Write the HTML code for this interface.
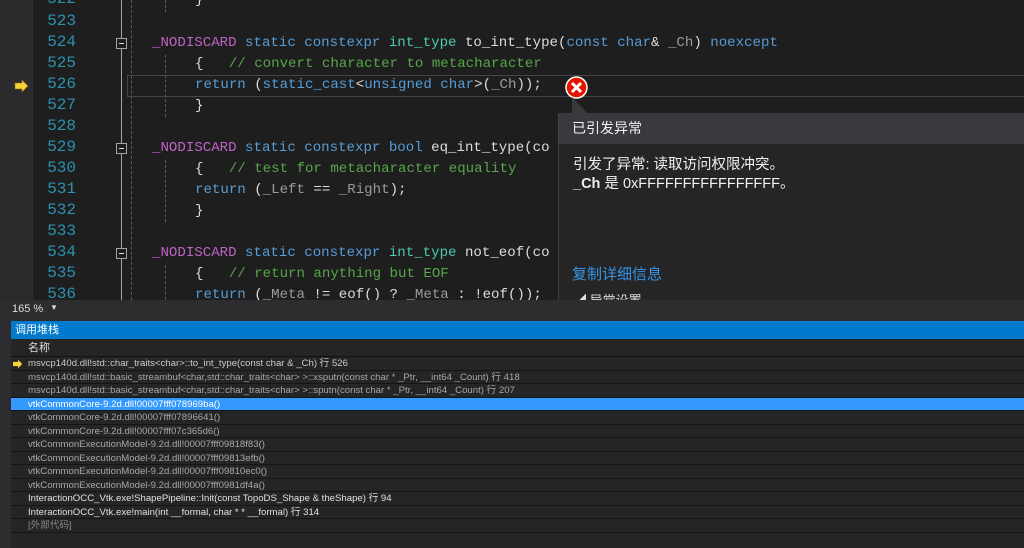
<!DOCTYPE html>
<html><head><meta charset="utf-8"><style>
*{margin:0;padding:0;box-sizing:border-box}
body{width:1024px;height:548px;overflow:hidden;background:#1e1e1e;position:relative;font-family:"Liberation Sans","Noto Sans CJK SC",sans-serif}
.gut{position:absolute;left:0;top:0;width:33px;height:300px;background:#2b2b2e}
.code{position:absolute;left:33px;top:0;width:991px;height:300px;background:#1e1e1e;overflow:hidden}
.ln{position:absolute;left:0;width:43px;text-align:right;color:#2b91af;font:16px "Liberation Mono",monospace}
.cl{position:absolute;left:119px;white-space:pre;color:#dcdcdc;font:14.1px "Liberation Mono","Noto Sans CJK SC",monospace}
.cl.i{left:162px}
.m{color:#bd63c5}.k{color:#569cd6}.t{color:#4ec9b0}.c{color:#57a64a}.g{color:#9b9b9b}
.fold{position:absolute;left:83px;width:11px;height:11px;border:1px solid #a5a5a5;background:#1e1e1e}
.fold:after{content:"";position:absolute;left:2px;top:4px;width:5px;height:1px;background:#ddd}
.vl{position:absolute;left:88px;width:1px;background:#a5a5a5}
.dash{position:absolute;width:0;border-left:1px dashed #5a5a5a}
.zoom{position:absolute;left:0;top:300px;width:1024px;height:20px;background:#2d2d30;color:#ddd;font-size:11px}
.panel{position:absolute;left:0;top:320px;width:1024px;height:228px;background:#2d2d30}
.hdr{position:absolute;left:11px;top:1px;width:1013px;height:18px;background:#007acc;color:#fff;font-size:11px;line-height:18px;padding-left:4px}
.colh{position:absolute;left:11px;top:19px;width:1013px;height:18px;background:#252526;color:#ddd;font-size:11px;line-height:18px;padding-left:17px;border-bottom:1px solid #111}
.row{position:absolute;left:11px;width:1013px;height:13.5px;background:#252526;border-bottom:1px solid #151515;color:#a8a8a8;font-size:9.6px;line-height:13px;padding-left:17px;white-space:nowrap}
.row.w{color:#e0e0e0}
.row.sel{background:#3399ff;color:#fff}
.pop{position:absolute;left:558px;top:113px;width:466px;height:187px;background:#252526;border-left:1px solid #3f3f46}
.ph{height:31px;background:#3a3a3e;color:#f1f1f1;font-size:14px;line-height:31px;padding-left:13px}
</style></head><body>
<div class="gut"></div>
<div class="code">
<div class="ln" style="top:-10px">522</div>
<div class="ln" style="top:12px">523</div>
<div class="ln" style="top:33px">524</div>
<div class="ln" style="top:54px">525</div>
<div class="ln" style="top:75px">526</div>
<div class="ln" style="top:96px">527</div>
<div class="ln" style="top:117px">528</div>
<div class="ln" style="top:138px">529</div>
<div class="ln" style="top:159px">530</div>
<div class="ln" style="top:180px">531</div>
<div class="ln" style="top:201px">532</div>
<div class="ln" style="top:222px">533</div>
<div class="ln" style="top:243px">534</div>
<div class="ln" style="top:264px">535</div>
<div class="ln" style="top:285px">536</div>
<div class="vl" style="top:0;height:300px"></div>
<div class="fold" style="top:38px"></div>
<div class="fold" style="top:143px"></div>
<div class="fold" style="top:248px"></div>
<div class="dash" style="left:98px;top:0;height:300px"></div>
<div class="dash" style="left:132px;top:0;height:12px"></div>
<div class="dash" style="left:132px;top:55px;height:62px"></div>
<div class="dash" style="left:132px;top:160px;height:62px"></div>
<div class="dash" style="left:132px;top:265px;height:40px"></div>
<div style="position:absolute;left:94px;top:75px;width:910px;height:22px;border:1px solid #46464a"></div>
<div class="cl i" style="top:-8px">}</div>
<div class="cl" style="top:35px"><span class="m">_NODISCARD</span> <span class="k">static constexpr</span> <span class="t">int_type</span> to_int_type(<span class="k">const char</span>&amp; <span class="g">_Ch</span>) <span class="k">noexcept</span></div>
<div class="cl i" style="top:56px">{   <span class="c">// convert character to metacharacter</span></div>
<div class="cl i" style="top:77px"><span class="k">return</span> (<span class="k">static_cast</span>&lt;<span class="k">unsigned char</span>&gt;(<span class="g">_Ch</span>));</div>
<div class="cl i" style="top:98px">}</div>
<div class="cl" style="top:140px"><span class="m">_NODISCARD</span> <span class="k">static constexpr bool</span> eq_int_type(co</div>
<div class="cl i" style="top:161px">{   <span class="c">// test for metacharacter equality</span></div>
<div class="cl i" style="top:182px"><span class="k">return</span> (<span class="g">_Left</span> == <span class="g">_Right</span>);</div>
<div class="cl i" style="top:203px">}</div>
<div class="cl" style="top:245px"><span class="m">_NODISCARD</span> <span class="k">static constexpr</span> <span class="t">int_type</span> not_eof(co</div>
<div class="cl i" style="top:266px">{   <span class="c">// return anything but EOF</span></div>
<div class="cl i" style="top:287px"><span class="k">return</span> (<span class="g">_Meta</span> != eof() ? <span class="g">_Meta</span> : !eof());</div>
</div>
<svg style="position:absolute;left:14px;top:79px" width="16" height="14" viewBox="0 0 16 14"><path d="M1 4h7V1l6 6-6 6V10H1z" fill="#f7d13b" stroke="#8a6d00" stroke-width=".6"/></svg>
<svg style="position:absolute;left:565px;top:76px" width="23" height="23" viewBox="0 0 23 23"><circle cx="11.5" cy="11.5" r="10.5" fill="#e51400" stroke="#fff" stroke-width="1.5"/><path d="M7 7l9 9M16 7l-9 9" stroke="#fff" stroke-width="3"/></svg>
<div class="pop">
<div class="ph">已引发异常</div>
<div style="position:absolute;left:14px;top:43px;color:#f1f1f1;font-size:14.5px;line-height:19px">引发了异常: 读取访问权限冲突。<br><b>_Ch</b> 是 0xFFFFFFFFFFFFFFFF。</div>
<div style="position:absolute;left:13px;top:150px;color:#3794e6;font-size:15px">复制详细信息</div>
<div style="position:absolute;left:14px;top:178px;color:#ddd;font-size:13px;height:9px;overflow:hidden;line-height:20px">◢ 异常设置</div>
</div>
<svg style="position:absolute;left:558px;top:97px" width="30" height="17"><path d="M14 0L14 17L30 17Z" fill="#3a3a3e"/></svg>
<div class="zoom"><span style="position:absolute;left:12px;top:3px">165 %</span><span style="position:absolute;left:50px;top:3px;font-size:8px">▼</span></div>
<div class="panel">
<div class="hdr">调用堆栈</div>
<div class="colh">名称</div>
<div class="row" style="top:37px;color:#ccc">msvcp140d.dll!std::char_traits&lt;char&gt;::to_int_type(const char &amp; _Ch) 行 526</div>
<div class="row" style="top:50.5px">msvcp140d.dll!std::basic_streambuf&lt;char,std::char_traits&lt;char&gt; &gt;::xsputn(const char * _Ptr, __int64 _Count) 行 418</div>
<div class="row" style="top:64px">msvcp140d.dll!std::basic_streambuf&lt;char,std::char_traits&lt;char&gt; &gt;::sputn(const char * _Ptr, __int64 _Count) 行 207</div>
<div class="row sel" style="top:77.5px">vtkCommonCore-9.2d.dll!00007fff078969ba()</div>
<div class="row" style="top:91px">vtkCommonCore-9.2d.dll!00007fff07896641()</div>
<div class="row" style="top:104.5px">vtkCommonCore-9.2d.dll!00007fff07c365d6()</div>
<div class="row" style="top:118px">vtkCommonExecutionModel-9.2d.dll!00007fff09818f83()</div>
<div class="row" style="top:131.5px">vtkCommonExecutionModel-9.2d.dll!00007fff09813efb()</div>
<div class="row" style="top:145px">vtkCommonExecutionModel-9.2d.dll!00007fff09810ec0()</div>
<div class="row" style="top:158.5px">vtkCommonExecutionModel-9.2d.dll!00007fff0981df4a()</div>
<div class="row w" style="top:172px">InteractionOCC_Vtk.exe!ShapePipeline::Init(const TopoDS_Shape &amp; theShape) 行 94</div>
<div class="row w" style="top:185.5px">InteractionOCC_Vtk.exe!main(int __formal, char * * __formal) 行 314</div>
<div class="row" style="top:199px;color:#888">[外部代码]</div>
<div style="position:absolute;left:11px;top:213px;width:1013px;height:15px;background:#252526"></div>
<svg style="position:absolute;left:12px;top:39px" width="12" height="10" viewBox="0 0 16 14"><path d="M1 4h7V1l6 6-6 6V10H1z" fill="#f7d13b"/></svg>
</div>
</body></html>
